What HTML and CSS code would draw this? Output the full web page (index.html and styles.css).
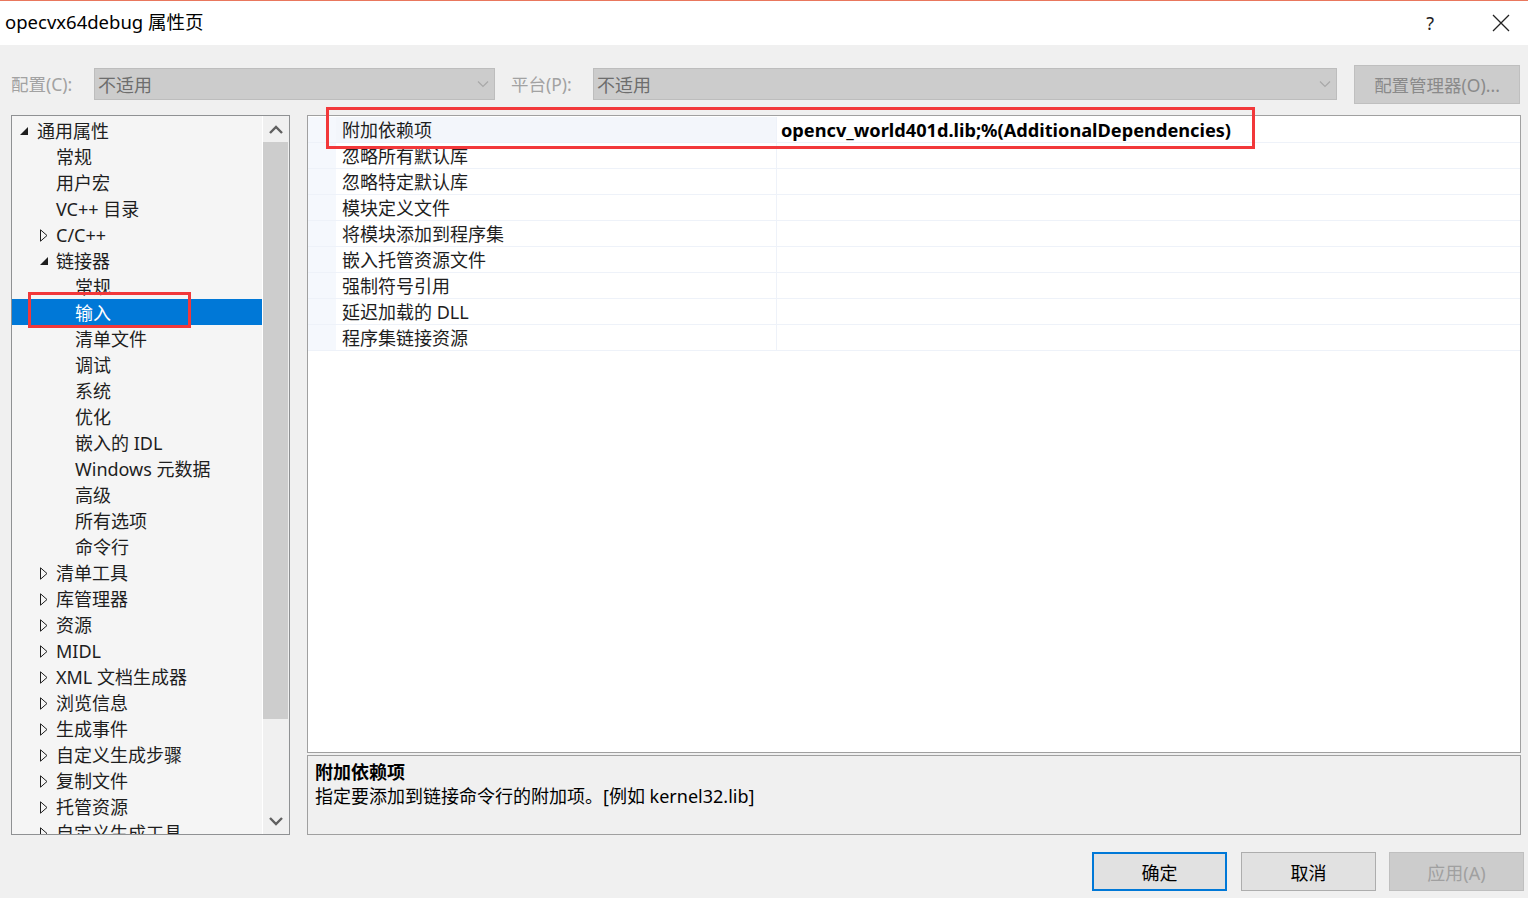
FILE: index.html
```html
<!DOCTYPE html>
<html lang="zh-CN">
<head>
<meta charset="utf-8">
<title>opecvx64debug 属性页</title>
<link rel="stylesheet" href="styles.css">
</head>
<body>
<div class="dialog">
  <div class="titlebar">
    <span class="title">opecvx64debug 属性页</span>
    <span class="tb-btns">
      <span class="help">?</span>
      <svg class="close" width="18" height="18" viewBox="0 0 18 18"><path d="M1 1L17 17M17 1L1 17" stroke="#222" stroke-width="1.3" fill="none"/></svg>
    </span>
  </div>

  <div class="toolbar">
    <span class="lbl">配置(C):</span>
    <div class="combo combo-cfg"><span>不适用</span><svg class="chev" width="12" height="8" viewBox="0 0 12 8"><path d="M1 1.5L6 6.5L11 1.5" stroke="#a8a8a8" stroke-width="1.2" fill="none"/></svg></div>
    <span class="lbl lbl-plat">平台(P):</span>
    <div class="combo combo-plat"><span>不适用</span><svg class="chev" width="12" height="8" viewBox="0 0 12 8"><path d="M1 1.5L6 6.5L11 1.5" stroke="#a8a8a8" stroke-width="1.2" fill="none"/></svg></div>
    <div class="btn-cfgmgr">配置管理器(O)...</div>
  </div>

  <div class="main">
    <div class="tree">
      <ul class="tree-list">
        <li class="l0"><span class="arr"><svg width="8" height="8" viewBox="0 0 8 8"><path d="M8 0L8 8L0 8Z" fill="#1e1e1e"/></svg></span>通用属性</li>
        <li class="l1">常规</li>
        <li class="l1">用户宏</li>
        <li class="l1">VC++ 目录</li>
        <li class="l1"><span class="arr"><svg width="8" height="13" viewBox="0 0 8 13"><path d="M0.5 0.8L7 6.5L0.5 12.2Z" fill="none" stroke="#1e1e1e" stroke-width="1"/></svg></span>C/C++</li>
        <li class="l1"><span class="arr"><svg width="8" height="8" viewBox="0 0 8 8"><path d="M8 0L8 8L0 8Z" fill="#1e1e1e"/></svg></span>链接器</li>
        <li class="l2">常规</li>
        <li class="l2 sel">输入</li>
        <li class="l2">清单文件</li>
        <li class="l2">调试</li>
        <li class="l2">系统</li>
        <li class="l2">优化</li>
        <li class="l2">嵌入的 IDL</li>
        <li class="l2">Windows 元数据</li>
        <li class="l2">高级</li>
        <li class="l2">所有选项</li>
        <li class="l2">命令行</li>
        <li class="l1"><span class="arr"><svg width="8" height="13" viewBox="0 0 8 13"><path d="M0.5 0.8L7 6.5L0.5 12.2Z" fill="none" stroke="#1e1e1e" stroke-width="1"/></svg></span>清单工具</li>
        <li class="l1"><span class="arr"><svg width="8" height="13" viewBox="0 0 8 13"><path d="M0.5 0.8L7 6.5L0.5 12.2Z" fill="none" stroke="#1e1e1e" stroke-width="1"/></svg></span>库管理器</li>
        <li class="l1"><span class="arr"><svg width="8" height="13" viewBox="0 0 8 13"><path d="M0.5 0.8L7 6.5L0.5 12.2Z" fill="none" stroke="#1e1e1e" stroke-width="1"/></svg></span>资源</li>
        <li class="l1"><span class="arr"><svg width="8" height="13" viewBox="0 0 8 13"><path d="M0.5 0.8L7 6.5L0.5 12.2Z" fill="none" stroke="#1e1e1e" stroke-width="1"/></svg></span>MIDL</li>
        <li class="l1"><span class="arr"><svg width="8" height="13" viewBox="0 0 8 13"><path d="M0.5 0.8L7 6.5L0.5 12.2Z" fill="none" stroke="#1e1e1e" stroke-width="1"/></svg></span>XML 文档生成器</li>
        <li class="l1"><span class="arr"><svg width="8" height="13" viewBox="0 0 8 13"><path d="M0.5 0.8L7 6.5L0.5 12.2Z" fill="none" stroke="#1e1e1e" stroke-width="1"/></svg></span>浏览信息</li>
        <li class="l1"><span class="arr"><svg width="8" height="13" viewBox="0 0 8 13"><path d="M0.5 0.8L7 6.5L0.5 12.2Z" fill="none" stroke="#1e1e1e" stroke-width="1"/></svg></span>生成事件</li>
        <li class="l1"><span class="arr"><svg width="8" height="13" viewBox="0 0 8 13"><path d="M0.5 0.8L7 6.5L0.5 12.2Z" fill="none" stroke="#1e1e1e" stroke-width="1"/></svg></span>自定义生成步骤</li>
        <li class="l1"><span class="arr"><svg width="8" height="13" viewBox="0 0 8 13"><path d="M0.5 0.8L7 6.5L0.5 12.2Z" fill="none" stroke="#1e1e1e" stroke-width="1"/></svg></span>复制文件</li>
        <li class="l1"><span class="arr"><svg width="8" height="13" viewBox="0 0 8 13"><path d="M0.5 0.8L7 6.5L0.5 12.2Z" fill="none" stroke="#1e1e1e" stroke-width="1"/></svg></span>托管资源</li>
        <li class="l1"><span class="arr"><svg width="8" height="13" viewBox="0 0 8 13"><path d="M0.5 0.8L7 6.5L0.5 12.2Z" fill="none" stroke="#1e1e1e" stroke-width="1"/></svg></span>自定义生成工具</li>
      </ul>
      <div class="vscroll">
        <div class="sarrow"><svg width="14" height="9" viewBox="0 0 14 9"><path d="M1 8L7 2L13 8" stroke="#606060" stroke-width="2.4" fill="none"/></svg></div>
        <div class="strack"><div class="sthumb"></div></div>
        <div class="sarrow"><svg width="14" height="9" viewBox="0 0 14 9"><path d="M1 1L7 7L13 1" stroke="#606060" stroke-width="2.4" fill="none"/></svg></div>
      </div>
      <div class="mark mark-tree"></div>
    </div>

    <div class="right">
      <div class="grid">
        <div class="prop first"><span class="gut"></span><span class="pname">附加依赖项</span><span class="pval">opencv_world401d.lib;%(AdditionalDependencies)</span></div>
        <div class="prop"><span class="gut"></span><span class="pname">忽略所有默认库</span><span class="pval"></span></div>
        <div class="prop"><span class="gut"></span><span class="pname">忽略特定默认库</span><span class="pval"></span></div>
        <div class="prop"><span class="gut"></span><span class="pname">模块定义文件</span><span class="pval"></span></div>
        <div class="prop"><span class="gut"></span><span class="pname">将模块添加到程序集</span><span class="pval"></span></div>
        <div class="prop"><span class="gut"></span><span class="pname">嵌入托管资源文件</span><span class="pval"></span></div>
        <div class="prop"><span class="gut"></span><span class="pname">强制符号引用</span><span class="pval"></span></div>
        <div class="prop"><span class="gut"></span><span class="pname">延迟加载的 DLL</span><span class="pval"></span></div>
        <div class="prop"><span class="gut"></span><span class="pname">程序集链接资源</span><span class="pval"></span></div>
        <div class="mark mark-grid"></div>
      </div>
      <div class="desc">
        <div class="desc-title">附加依赖项</div>
        <div class="desc-text">指定要添加到链接命令行的附加项。[例如 kernel32.lib]</div>
      </div>
    </div>
  </div>

  <div class="footer">
    <div class="btn btn-ok">确定</div>
    <div class="btn btn-cancel">取消</div>
    <div class="btn btn-apply">应用(A)</div>
  </div>
</div>
</body>
</html>
```

FILE: styles.css
```css
* { box-sizing: border-box; }
html, body { margin: 0; padding: 0; }
body {
  width: 1528px;
  height: 898px;
  overflow: hidden;
  background: #f0f0f0;
  font-family: "Noto Sans", "Noto Sans CJK SC", sans-serif;
  font-size: 18px;
  color: #1e1e1e;
}
.dialog { width: 1528px; height: 898px; display: flex; flex-direction: column; }

.titlebar {
  height: 45px;
  background: #ffffff;
  border-top: 1px solid #e9775d;
  display: flex;
  align-items: center;
  justify-content: space-between;
  padding: 0 18px 0 5px;
}
.title { font-size: 18.5px; color: #000; line-height: 24px; margin-top: -2px; }
.tb-btns { display: flex; align-items: center; gap: 58px; }
.help { font-size: 18px; color: #222; line-height: 20px; }
.close { display: block; }

.toolbar {
  height: 70px;
  display: flex;
  align-items: center;
  padding: 8px 8px 0 11px;
}
.lbl { color: #a2a2a2; font-size: 17.5px; width: 83px; line-height: 22px; }
.lbl-plat { margin-left: 16px; width: 82px; }
.combo {
  height: 32px;
  background: #cccccc;
  border: 1px solid #bdbdbd;
  display: flex;
  align-items: center;
  justify-content: space-between;
  padding: 0 5px 0 3px;
  color: #6d6d6d;
  font-size: 18px;
}
.combo-cfg { width: 401px; }
.combo-plat { width: 744px; }
.chev { display: block; }
.btn-cfgmgr {
  margin-left: auto;
  width: 166px;
  height: 39px;
  background: #cccccc;
  border: 1px solid #bfbfbf;
  color: #8a8a8a;
  font-size: 17.5px;
  display: flex;
  align-items: center;
  justify-content: center;
}

.main {
  display: flex;
  gap: 17px;
  padding: 0 7px 0 11px;
  height: 720px;
}

.tree {
  position: relative;
  width: 279px;
  height: 720px;
  border: 1px solid #8f9193;
  background: #f5f5f5;
  display: flex;
  overflow: hidden;
}
.tree-list {
  list-style: none;
  margin: 0;
  padding: 1px 0 0 0;
  width: 250px;
  flex: none;
}
.tree-list li {
  height: 26px;
  line-height: 28px;
  white-space: nowrap;
  position: relative;
  color: #1e1e1e;
}
.tree-list .l0 { padding-left: 25px; }
.tree-list .l1 { padding-left: 44px; }
.tree-list .l2 { padding-left: 63px; }
.tree-list li.sel { background: #0078d7; color: #ffffff; }
.arr { position: absolute; top: 1px; height: 26px; display: flex; align-items: center; }
.l0 .arr { left: 8px; }
.l1 .arr { left: 28px; }
.arr svg { display: block; }

.vscroll {
  width: 27px;
  border-left: 1px solid #ffffff;
  background: #f0f0f0;
  display: flex;
  flex-direction: column;
}
.sarrow { height: 26px; display: flex; align-items: center; justify-content: center; }
.sarrow svg { display: block; }
.strack { flex: 1; }
.sthumb { height: 577px; background: #cdcdcd; margin: 0 1px 0 0; }

.right { flex: 1; display: flex; flex-direction: column; gap: 2px; }
.grid {
  position: relative;
  height: 638px;
  border: 1px solid #a0a0a0;
  background: #ffffff;
  padding-top: 1px;
}
.prop {
  display: flex;
  height: 26px;
  border-bottom: 1px solid #eef2f9;
}
.gut { width: 28px; background: #f5f8fd; flex: none; }
.pname {
  width: 441px;
  flex: none;
  padding-left: 6px;
  line-height: 27px;
  border-right: 1px solid #eef2f9;
  white-space: nowrap;
}
.pval { flex: 1; padding-left: 4px; line-height: 27px; font-weight: 700; font-size: 18.2px; white-space: nowrap; color: #000; }
.prop.first .pname { background: #f3f6fb; }

.desc {
  height: 80px;
  border: 1px solid #a0a0a0;
  background: #f0f0f0;
  padding: 4px 7px;
}
.desc-title { font-weight: 700; font-size: 18px; line-height: 24px; color: #000; }
.desc-text { font-size: 18px; line-height: 25px; color: #000; }

.mark { position: absolute; border: 3px solid #f2383a; pointer-events: none; }
.mark-tree { left: 16px; top: 176px; width: 163px; height: 36px; }
.mark-grid { left: 18px; top: -9px; width: 929px; height: 42px; }

.footer {
  display: flex;
  justify-content: flex-end;
  padding: 17px 4px 0 0;
}
.btn {
  width: 135px;
  height: 39px;
  display: flex;
  align-items: center;
  justify-content: center;
  font-size: 18px;
  background: #e1e1e1;
  border: 1px solid #adadad;
  color: #000;
}
.btn-ok { border: 2px solid #0078d7; margin-right: 14px; }
.btn-cancel { margin-right: 13px; }
.btn-apply { background: #cccccc; border-color: #bfbfbf; color: #a0a0a0; }
```
